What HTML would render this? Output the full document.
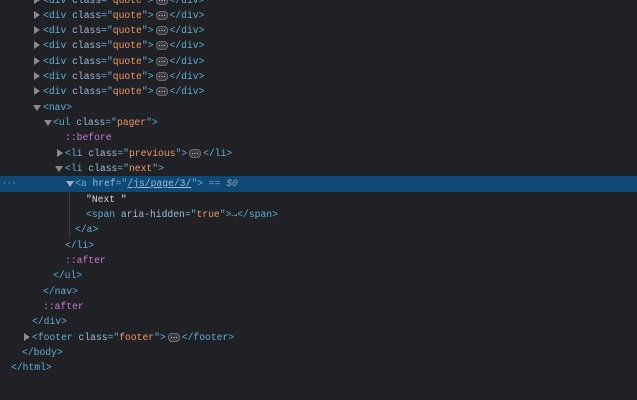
<!DOCTYPE html>
<html><head><style>
body{margin:0;width:637px;height:400px;background:#202124;overflow:hidden;font-family:"Liberation Mono",monospace;font-size:9.7px;}
.l{position:absolute;left:0;right:0;height:15.35px;line-height:15.35px;white-space:pre;color:#e8eaed}
.t{color:#5db0d7}.a{color:#9bbbdc}.v{color:#f29766}.p{color:#c77ad2}.s{color:#d5d5d5}
.tri{position:absolute;width:0;height:0}
.r{border-top:4px solid transparent;border-bottom:4px solid transparent;border-left:6px solid #8a8a8a;margin-top:3px}
.d{border-left:4px solid transparent;border-right:4px solid transparent;border-top:6px solid #8a8a8a;margin-top:5px}
.e{display:inline-block;position:relative;top:3px;width:12px;height:9px;border-radius:4px;background:#3c3d40;border:1px solid #6b6b6b;margin:0 2px;box-sizing:border-box;vertical-align:top}
.e::after{content:"";position:absolute;left:2px;top:3px;width:6px;height:1px;background:repeating-linear-gradient(90deg,#ccc 0 1px,transparent 1px 2.5px)}
.sel{background:#0e4874}
.vl{position:absolute;width:1px;background:#3a3b3e}
</style></head><body>
<div class="l" style="top:-7px"><span class="tri r" style="left:34px"></span><span style="position:absolute;left:43px"><span class="t">&lt;div </span><span class="a">class</span><span class="t">="</span><span class="v">quote</span><span class="t">"&gt;</span><span class="e"></span><span class="t">&lt;/div&gt;</span></span></div>
<div class="l" style="top:8px"><span class="tri r" style="left:34px"></span><span style="position:absolute;left:43px"><span class="t">&lt;div </span><span class="a">class</span><span class="t">="</span><span class="v">quote</span><span class="t">"&gt;</span><span class="e"></span><span class="t">&lt;/div&gt;</span></span></div>
<div class="l" style="top:23px"><span class="tri r" style="left:34px"></span><span style="position:absolute;left:43px"><span class="t">&lt;div </span><span class="a">class</span><span class="t">="</span><span class="v">quote</span><span class="t">"&gt;</span><span class="e"></span><span class="t">&lt;/div&gt;</span></span></div>
<div class="l" style="top:38px"><span class="tri r" style="left:34px"></span><span style="position:absolute;left:43px"><span class="t">&lt;div </span><span class="a">class</span><span class="t">="</span><span class="v">quote</span><span class="t">"&gt;</span><span class="e"></span><span class="t">&lt;/div&gt;</span></span></div>
<div class="l" style="top:54px"><span class="tri r" style="left:34px"></span><span style="position:absolute;left:43px"><span class="t">&lt;div </span><span class="a">class</span><span class="t">="</span><span class="v">quote</span><span class="t">"&gt;</span><span class="e"></span><span class="t">&lt;/div&gt;</span></span></div>
<div class="l" style="top:69px"><span class="tri r" style="left:34px"></span><span style="position:absolute;left:43px"><span class="t">&lt;div </span><span class="a">class</span><span class="t">="</span><span class="v">quote</span><span class="t">"&gt;</span><span class="e"></span><span class="t">&lt;/div&gt;</span></span></div>
<div class="l" style="top:84px"><span class="tri r" style="left:34px"></span><span style="position:absolute;left:43px"><span class="t">&lt;div </span><span class="a">class</span><span class="t">="</span><span class="v">quote</span><span class="t">"&gt;</span><span class="e"></span><span class="t">&lt;/div&gt;</span></span></div>
<div class="l" style="top:100px"><span class="tri d" style="left:33px"></span><span style="position:absolute;left:43px" class="t">&lt;nav&gt;</span></div>
<div class="l" style="top:115px"><span class="tri d" style="left:44px"></span><span style="position:absolute;left:53px"><span class="t">&lt;ul </span><span class="a">class</span><span class="t">="</span><span class="v">pager</span><span class="t">"&gt;</span></span></div>
<div class="l" style="top:130px"><span style="position:absolute;left:65px" class="p">::before</span></div>
<div class="l" style="top:146px"><span class="tri r" style="left:57px"></span><span style="position:absolute;left:65px"><span class="t">&lt;li </span><span class="a">class</span><span class="t">="</span><span class="v">previous</span><span class="t">"&gt;</span><span class="e"></span><span class="t">&lt;/li&gt;</span></span></div>
<div class="l" style="top:161px"><span class="tri d" style="left:55px"></span><span style="position:absolute;left:65px"><span class="t">&lt;li </span><span class="a">class</span><span class="t">="</span><span class="v">next</span><span class="t">"&gt;</span></span></div>
<div class="l sel" style="top:176px;height:16px"><span style="position:absolute;left:2px;color:#9ab;font-size:8px">···</span><span class="tri d" style="left:66px;border-top-color:#aab"></span><span style="position:absolute;left:75px"><span class="t">&lt;a </span><span class="a">href</span><span class="t">="</span><span class="v" style="color:#9bbbdc;text-decoration:underline">/js/page/3/</span><span class="t">"&gt;</span><span style="color:#8a99aa"> == </span><span style="color:#8a99aa;font-style:italic">$0</span></span></div>
<div class="vl" style="left:69px;top:192px;height:46px"></div>
<div class="l" style="top:192px"><span style="position:absolute;left:86px" class="s">"Next "</span></div>
<div class="l" style="top:207px"><span style="position:absolute;left:86px"><span class="t">&lt;span </span><span class="a">aria-hidden</span><span class="t">="</span><span class="v">true</span><span class="t">"&gt;</span><span class="s">→</span><span class="t">&lt;/span&gt;</span></span></div>
<div class="l" style="top:222px"><span style="position:absolute;left:75px" class="t">&lt;/a&gt;</span></div>
<div class="l" style="top:238px"><span style="position:absolute;left:65px" class="t">&lt;/li&gt;</span></div>
<div class="l" style="top:253px"><span style="position:absolute;left:65px" class="p">::after</span></div>
<div class="l" style="top:268px"><span style="position:absolute;left:53px" class="t">&lt;/ul&gt;</span></div>
<div class="l" style="top:284px"><span style="position:absolute;left:43px" class="t">&lt;/nav&gt;</span></div>
<div class="l" style="top:299px"><span style="position:absolute;left:43px" class="p">::after</span></div>
<div class="l" style="top:314px"><span style="position:absolute;left:32px" class="t">&lt;/div&gt;</span></div>
<div class="l" style="top:330px"><span class="tri r" style="left:24px"></span><span style="position:absolute;left:32px"><span class="t">&lt;footer </span><span class="a">class</span><span class="t">="</span><span class="v">footer</span><span class="t">"&gt;</span><span class="e"></span><span class="t">&lt;/footer&gt;</span></span></div>
<div class="l" style="top:345px"><span style="position:absolute;left:22px" class="t">&lt;/body&gt;</span></div>
<div class="l" style="top:360px"><span style="position:absolute;left:11px" class="t">&lt;/html&gt;</span></div>
</body></html>
